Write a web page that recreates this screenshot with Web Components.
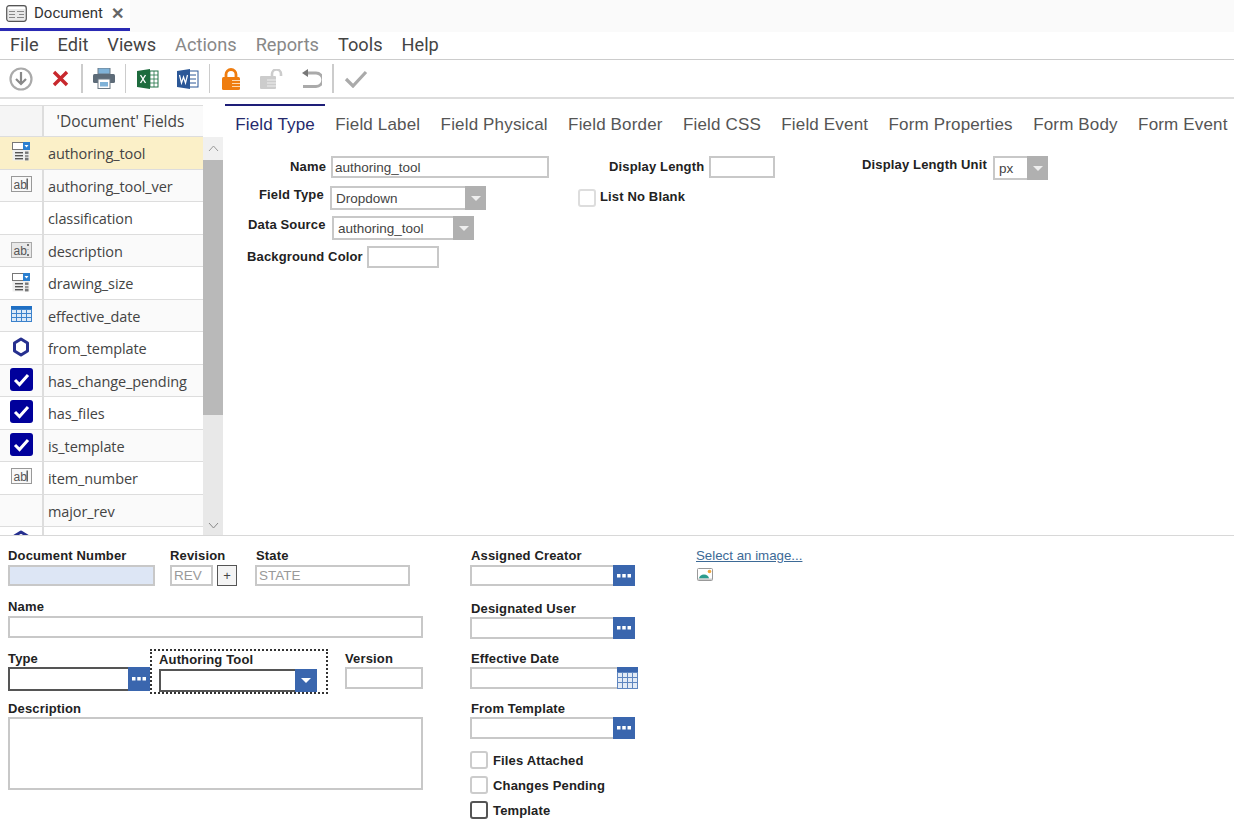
<!DOCTYPE html>
<html><head><meta charset="utf-8"><style>
html,body{margin:0;padding:0;background:#fff}
body{width:1234px;height:829px;overflow:hidden;display:flex;flex-direction:column;font-family:"Liberation Sans",sans-serif}
svg{display:block}
</style></head><body>
<app-tabbar></app-tabbar>
<app-menu></app-menu>
<app-toolbar></app-toolbar>
<design-pane></design-pane>
<form-canvas></form-canvas>
<script>
const ICONS={
dd:`<svg width="18" height="19" viewBox="0 0 18 19"><rect x=".5" y=".5" width="11" height="7" fill="#fff" stroke="#777"/><rect x="11" y="0" width="7" height="8" fill="#2a7fd0"/><path d="M12.500 3h4l-2 2.500z" fill="#fff"/><rect x=".5" y="8" width="17" height="10.500" fill="#eee"/><rect x="3" y="10" width="8" height="1.400" fill="#555"/><rect x="3" y="13" width="8" height="1.400" fill="#555"/><rect x="3" y="16" width="8" height="1.400" fill="#555"/><rect x="13" y="9.500" width="3.500" height="2.400" fill="#777"/><rect x="13" y="13" width="3.500" height="2.400" fill="#999"/><rect x="13" y="16" width="3.500" height="2.400" fill="#777"/></svg>`,
abl:`<svg width="21" height="16" viewBox="0 0 21 16"><rect x=".5" y=".5" width="20" height="15" fill="#f8f8f8" stroke="#999"/><text x="2.500" y="12.500" font-family="Liberation Sans" font-size="12" fill="#555">ab</text><rect x="15.500" y="2.500" width="1.400" height="11" fill="#555"/></svg>`,
abt:`<svg width="21" height="16" viewBox="0 0 21 16"><rect x=".5" y=".5" width="20" height="15" fill="#e8e8e8" stroke="#aaa"/><text x="2.500" y="12.500" font-family="Liberation Sans" font-size="12" fill="#555">ab</text><rect x="16" y="2" width="2" height="2" fill="#777"/><rect x="16" y="7" width="2" height="1" fill="#bbb"/><rect x="16" y="12" width="2" height="2" fill="#777"/></svg>`,
cal:`<svg width="21" height="16" viewBox="0 0 21 16"><rect width="21" height="4" fill="#1f6fc4"/><rect x=".5" y="3.500" width="20" height="12" fill="#dbe9f8" stroke="#3b82cc"/><path d="M5.500 4v12M10.500 4v12M15.500 4v12M0 7.500h21M0 11.500h21" stroke="#3b82cc"/></svg>`,
hex:`<svg width="20" height="20" viewBox="0 0 20 20"><path d="M10 2l6.500 4v8l-6.500 4-6.500-4V6z" fill="#fff" stroke="#26308f" stroke-width="3" stroke-linejoin="round"/></svg>`,
chk:`<svg width="23" height="23" viewBox="0 0 23 23"><rect width="23" height="23" rx="3" fill="#00009b"/><path d="M5 12l4.500 4.500L18 7" fill="none" stroke="#fff" stroke-width="3"/></svg>`
};
function def(name,html,init){customElements.define(name,class extends HTMLElement{constructor(){super();this.attachShadow({mode:'open'}).innerHTML=typeof html==='function'?html(this):html}connectedCallback(){if(init)init(this)}})}

def('app-tabbar',`<style>
:host{display:flex;height:32px;background:#fafafa;flex:none}
.tab{width:130px;height:31px;box-sizing:border-box;background:#fff;border-bottom:3px solid #2a2ab4;display:flex;align-items:center;padding:0 0 2px 6px;gap:7px;font:15px Roboto,sans-serif;color:#333}
.x{font-size:16px;font-weight:700;color:#666;margin-left:1px;font-family:"Liberation Sans"}
</style><div class="tab"><svg width="21" height="17" viewBox="0 0 21 17"><rect x=".7" y=".7" width="19.600" height="15.600" rx="2.500" fill="#e9e9e9" stroke="#555" stroke-width="1.200"/><rect x="2" y="2" width="17" height="2" fill="#fff"/><path d="M3 6.500h6M3 9.500h6M3 12.500h6M11 6.500h7M13 9.500h5M11 12.500h7" stroke="#888"/></svg><span>Document</span><span class="x">✕</span></div>`);

def('app-menu',`<style>
:host{display:flex;height:28px;box-sizing:border-box;flex:none;border-bottom:1px solid #ccc;padding:0 0 0 10px;gap:19px;align-items:center;font:18.200px Roboto,sans-serif;color:#444}
span.off{color:#888}
span{position:relative;top:-1px}
</style><span>File</span><span>Edit</span><span>Views</span><span class="off">Actions</span><span class="off">Reports</span><span>Tools</span><span>Help</span>`);

def('app-toolbar',`<style>
:host{display:flex;height:39px;box-sizing:border-box;flex:none;border-bottom:2px solid #ddd;align-items:center;padding-left:8px}
i{display:block;width:1px;height:29px;background:#ccc;flex:none}
i.b{width:2px}
.s{display:flex;align-items:center;justify-content:center;flex:none}
</style>
<div class="s" style="width:25px"><svg width="24" height="24" viewBox="0 0 24 24"><circle cx="12" cy="12" r="10.500" fill="none" stroke="#aaa" stroke-width="2.200"/><path d="M12 5v12M7 12l5 5 5-5" fill="none" stroke="#888" stroke-width="2.200"/></svg></div>
<div class="s" style="width:48px;padding-left:6px;box-sizing:border-box"><svg width="17" height="17" viewBox="0 0 17 17"><path d="M2 2l13 13M15 2L2 15" stroke="#c8282d" stroke-width="3.400"/></svg></div>
<i class="b"></i>
<div class="s" style="width:42px"><svg width="22" height="21" viewBox="0 0 22 21"><rect x="5" y="0" width="12" height="6" fill="#7fb2d8" stroke="#6c7a86"/><rect y="6" width="22" height="9" rx="1.500" fill="#5d6b78"/><rect x="5" y="11" width="12" height="9.500" fill="#fff" stroke="#6c7a86"/><rect x="7" y="14" width="8" height="4.500" fill="#7fb2d8"/></svg></div>
<i></i>
<div class="s" style="width:43px"><svg width="22" height="20" viewBox="0 0 22 20"><rect x="8" y="2" width="13" height="16" fill="#fff" stroke="#217346"/><path d="M13 2v16M17 2v16M8 6h13M8 10h13M8 14h13" stroke="#217346" stroke-width=".8"/><path d="M0 2l13-2v20L0 18z" fill="#1d6b3d"/><path d="M3.500 6l5 8M8.500 6l-5 8" stroke="#fff" stroke-width="1.400"/></svg></div>
<div class="s" style="width:37px;margin-right:3px"><svg width="22" height="20" viewBox="0 0 22 20"><rect x="8" y="2" width="13" height="16" fill="#fff" stroke="#2b5797"/><path d="M12 6h7M12 10h7M12 14h7" stroke="#2b5797"/><path d="M0 2l13-2v20L0 18z" fill="#2b5797"/><path d="M2.500 6l2 8 2-6 2 6 2-8" fill="none" stroke="#fff" stroke-width="1.200"/></svg></div>
<i></i>
<div class="s" style="width:42px"><svg width="18" height="22" viewBox="0 0 18 22"><path d="M4 10V6.500a5 5 0 0 1 10 0V10" fill="none" stroke="#ef7d0f" stroke-width="2.800"/><rect y="9" width="18" height="13" rx="1.500" fill="#ef7d0f"/><path d="M10 12.500h8M10 15.500h8M10 18.500h8" stroke="#ffd9ae" stroke-width="1.200"/></svg></div>
<div class="s" style="width:39px"><svg width="23" height="20" viewBox="0 0 23 20"><path d="M12 8V5a4.500 4.500 0 0 1 9 0v2" fill="none" stroke="#ccc" stroke-width="2.600"/><rect y="7" width="16" height="13" rx="1" fill="#ccc"/><path d="M7 11h9M7 14h9M7 17h9" stroke="#eee"/></svg></div>
<div class="s" style="width:41px"><svg width="21" height="19" viewBox="0 0 21 19"><path d="M5 4h10a6 6 0 0 1 0 13.500H2" fill="none" stroke="#aaa" stroke-width="2.800"/><path d="M7 0v8L1 4z" fill="#777"/></svg></div>
<i class="b"></i>
<div class="s" style="width:43px"><svg width="24" height="18" viewBox="0 0 24 18"><path d="M2 9l7 7L22 2" fill="none" stroke="#aaa" stroke-width="3.200"/></svg></div>`);

def('field-row',el=>`<style>
:host{display:flex;height:32.500px;box-sizing:border-box;border-bottom:1px solid #ddd;background:var(--bg,#fff);flex:none}
.i{width:44px;flex:none;box-sizing:border-box;border-right:2px solid var(--div,#ddd);display:flex;justify-content:center;padding-top:${el.getAttribute('pt')||4}px}
.t{padding-left:4px;font:14.500px "Open Sans",sans-serif;color:#444;line-height:34px;height:31px;letter-spacing:-.1px}
</style><div class="i">${ICONS[el.getAttribute('icon')]||''}</div><div class="t"><slot></slot></div>`);

def('field-list',`<style>
:host{display:flex;flex-direction:column;width:203px;flex:none;padding-top:6px;box-sizing:border-box;overflow:hidden;height:436px}
.h{display:flex;height:32px;flex:none;box-sizing:border-box;border-top:1px solid #ddd;border-bottom:1px solid #ddd;background:#f5f5f5}
.h b{width:44px;flex:none;border-right:2px solid #ddd;box-sizing:border-box}
.h span{flex:1;text-align:center;font:15.500px "Open Sans",sans-serif;color:#444;line-height:30px;background:#fafafa;padding-right:6px}
</style><div class="h"><b></b><span>'Document' Fields</span></div><slot></slot>`);

def('scroll-bar',`<style>
:host{display:flex;flex-direction:column;width:20px;flex:none;margin-top:38px;height:398px;background:#e8e8e8}
.u{height:23px;background:#f0f0f0;display:flex;align-items:center;justify-content:center}
.t{height:255px;background:#b9b9b9}
.f{flex:1}
.d{height:20px;display:flex;align-items:center;justify-content:center;margin-bottom:0}
</style><div class="u"><svg width="11" height="7" viewBox="0 0 11 7"><path d="M1 6l4.500-5 4.500 5" fill="none" stroke="#999"/></svg></div><div class="t"></div><div class="f"></div><div class="d"><svg width="11" height="7" viewBox="0 0 11 7"><path d="M1 1l4.500 5 4.500-5" fill="none" stroke="#888"/></svg></div>`);

def('prop-tabs',`<style>
:host{display:flex;height:51px;padding-top:5px;box-sizing:border-box;flex:none;font:17px "Liberation Sans",sans-serif;color:#555;letter-spacing:.16px}
span{display:block;padding:0 10.200px;line-height:38px;white-space:nowrap;border-top:2px solid transparent}
span.on{color:#262a6c;border-top-color:#1e1e78;}
</style><span class="on">Field Type</span><span>Field Label</span><span>Field Physical</span><span>Field Border</span><span>Field CSS</span><span>Field Event</span><span>Form Properties</span><span>Form Body</span><span>Form Event</span>`);

/* A field placed on the form-designer canvas: its place is the content */
def('fd-label',`<style>:host{position:absolute;left:var(--x);top:var(--y);display:block;font:700 13px/16px "Liberation Sans",sans-serif;color:#222;white-space:nowrap;letter-spacing:.15px}</style><slot></slot>`);
def('fd-input',el=>`<style>:host{position:absolute;left:var(--x);top:var(--y);width:var(--w);height:var(--h,22px);box-sizing:border-box;display:flex;align-items:center;background:var(--bg,#fff);border:var(--bw,2px) solid var(--bc,#c8c8c8);border-radius:0;padding-left:2px;font:13.500px "Liberation Sans",sans-serif;color:var(--c,#444);white-space:nowrap}</style><slot></slot>`);
def('fd-select',`<style>:host{position:absolute;left:var(--x);top:var(--y);width:var(--w);height:24px;box-sizing:border-box;display:flex;background:#fff;border:2px solid #c8c8c8;font:13.500px "Liberation Sans",sans-serif;color:#444}
.t{flex:1;padding:3px 0 0 4px}
.a{width:21px;background:#b0b0b0;display:flex;align-items:center;justify-content:center;margin:-2px -2px -2px 0;flex:none}
</style><div class="t"><slot></slot></div><div class="a"><svg width="10" height="5" viewBox="0 0 10 5"><path d="M0 0h10L5 5z" fill="#eee"/></svg></div>`);
const DOTS=`<svg width="14" height="4" viewBox="0 0 14 4"><rect x="0" width="3.500" height="3.500" fill="#fff"/><rect x="5.250" width="3.500" height="3.500" fill="#fff"/><rect x="10.500" width="3.500" height="3.500" fill="#fff"/></svg>`;
def('fd-lookup',`<style>:host{position:absolute;left:var(--x);top:var(--y);width:var(--w,165px);height:var(--h,22px);display:flex;box-sizing:border-box}
.f{flex:1;box-sizing:border-box;border:2px solid var(--bc,#c8c8c8);border-right:0;background:#fff}
.b{width:22px;background:#3a66ae;display:flex;align-items:center;justify-content:center;flex:none}
</style><div class="f"></div><div class="b">${DOTS}</div>`);
def('fd-date',`<style>:host{position:absolute;left:var(--x);top:var(--y);width:168px;height:22px;display:flex}
.f{flex:1;box-sizing:border-box;border:2px solid #c8c8c8;border-right:0;background:#fff}
</style><div class="f"></div><svg width="21" height="22" viewBox="0 0 21 22"><rect width="21" height="5" fill="#3a66ae"/><rect x=".5" y="5.500" width="20" height="16" fill="#e3ebf6" stroke="#5f86c0"/><path d="M5.500 5v17M10.500 5v17M15.500 5v17M0 10.500h21M0 15.500h21" stroke="#5f86c0"/></svg>`);
def('fd-check',`<style>:host{position:absolute;left:var(--x);top:var(--y);width:18px;height:18px;box-sizing:border-box;border:2px solid var(--bc,#ccc);border-radius:3px;background:#fff;display:block}</style>`);
def('fd-plus',`<style>:host{position:absolute;left:var(--x);top:var(--y);width:20px;height:21px;box-sizing:border-box;border:1.500px solid #555;background:#f4f4f4;display:flex;align-items:center;justify-content:center;font:13px "Liberation Sans",sans-serif;color:#444}</style>+`);
def('fd-focus',`<style>:host{position:absolute;left:var(--x);top:var(--y);width:178px;height:45px;box-sizing:border-box;border:2px dotted #333;display:block}</style>`);
def('fd-link',`<style>:host{position:absolute;left:var(--x);top:var(--y);font:13.300px/16px "Liberation Sans",sans-serif;color:#3d6a96;text-decoration:underline;white-space:nowrap}</style><slot></slot>`);

def('design-pane',`<style>
:host{display:flex;flex:none;height:437px;border-bottom:1px solid #d8d8d8;box-sizing:border-box;position:relative}
.r{margin-left:2px;flex:1;display:flex;flex-direction:column}
.p{position:relative;flex:1}
</style>
<field-list>
<field-row icon="dd" pt="5" style="--bg:#fbf0c8;--div:#fbf0c8">authoring_tool</field-row>
<field-row icon="abl" pt="6" style="--bg:#fafafa">authoring_tool_ver</field-row>
<field-row>classification</field-row>
<field-row icon="abt" pt="7" style="--bg:#fafafa">description</field-row>
<field-row icon="dd" pt="6">drawing_size</field-row>
<field-row icon="cal" pt="6" style="--bg:#fafafa">effective_date</field-row>
<field-row icon="hex" pt="5">from_template</field-row>
<field-row icon="chk" pt="3" style="--bg:#fafafa">has_change_pending</field-row>
<field-row icon="chk" pt="3">has_files</field-row>
<field-row icon="chk" pt="3" style="--bg:#fafafa">is_template</field-row>
<field-row icon="abl" pt="6">item_number</field-row>
<field-row style="--bg:#fafafa">major_rev</field-row>
<field-row icon="hex" pt="3"></field-row>
</field-list>
<scroll-bar></scroll-bar>
<div class="r"><prop-tabs></prop-tabs><div class="p">
<fd-label style="--x:65px;--y:9px;width:36px;text-align:right">Name</fd-label>
<fd-input style="--x:106px;--y:6px;--w:218px">authoring_tool</fd-input>
<fd-label style="--x:384px;--y:9px">Display Length</fd-label>
<fd-input style="--x:484px;--y:6px;--w:66px"></fd-input>
<fd-label style="--x:637px;--y:7px">Display Length Unit</fd-label>
<fd-select style="--x:768px;--y:6px;--w:55px">px</fd-select>
<fd-label style="--x:34px;--y:37px">Field Type</fd-label>
<fd-select style="--x:105px;--y:36px;--w:156px">Dropdown</fd-select>
<fd-check style="--x:353px;--y:39px;--bc:#ddd"></fd-check>
<fd-label style="--x:375px;--y:39px">List No Blank</fd-label>
<fd-label style="--x:23px;--y:67px">Data Source</fd-label>
<fd-select style="--x:107px;--y:66px;--w:142px">authoring_tool</fd-select>
<fd-label style="--x:22px;--y:99px">Background Color</fd-label>
<fd-input style="--x:142px;--y:96px;--w:72px"></fd-input>
</div></div>`);

def('form-canvas',`<style>:host{display:block;position:relative;flex:1}
.img{position:absolute;left:697px;top:32px}
</style>
<fd-label style="--x:8px;--y:12px">Document Number</fd-label>
<fd-input style="--x:8px;--y:29px;--w:147px;--h:21px;--bg:#dde6f5"></fd-input>
<fd-label style="--x:170px;--y:12px">Revision</fd-label>
<fd-input style="--x:170px;--y:29px;--w:43px;--h:21px;--c:#999">REV</fd-input>
<fd-plus style="--x:217px;--y:29px"></fd-plus>
<fd-label style="--x:256px;--y:12px">State</fd-label>
<fd-input style="--x:255px;--y:29px;--w:155px;--h:21px;--c:#999">STATE</fd-input>
<fd-label style="--x:8px;--y:63px">Name</fd-label>
<fd-input style="--x:8px;--y:80px;--w:415px"></fd-input>
<fd-label style="--x:8px;--y:115px">Type</fd-label>
<fd-lookup style="--x:8px;--y:131px;--w:142px;--h:24px;--bc:#555"></fd-lookup>
<fd-focus style="--x:150px;--y:113px"></fd-focus>
<fd-label style="--x:159px;--y:116px">Authoring Tool</fd-label>
<fd-lookup id="at" style="--x:159px;--y:133px;--w:158px;--h:23px;--bc:#555"></fd-lookup>
<fd-label style="--x:345px;--y:115px">Version</fd-label>
<fd-input style="--x:345px;--y:131px;--w:78px"></fd-input>
<fd-label style="--x:8px;--y:165px">Description</fd-label>
<fd-input style="--x:8px;--y:181px;--w:415px;--h:73px"></fd-input>
<fd-label style="--x:471px;--y:12px">Assigned Creator</fd-label>
<fd-lookup style="--x:470px;--y:29px;--h:21px"></fd-lookup>
<fd-label style="--x:471px;--y:65px">Designated User</fd-label>
<fd-lookup style="--x:470px;--y:81px"></fd-lookup>
<fd-label style="--x:471px;--y:115px">Effective Date</fd-label>
<fd-date style="--x:470px;--y:131px"></fd-date>
<fd-label style="--x:471px;--y:165px">From Template</fd-label>
<fd-lookup style="--x:470px;--y:181px"></fd-lookup>
<fd-check style="--x:470px;--y:215px;--bc:#ccc"></fd-check>
<fd-label style="--x:493px;--y:217px">Files Attached</fd-label>
<fd-check style="--x:470px;--y:240px;--bc:#ccc"></fd-check>
<fd-label style="--x:493px;--y:242px">Changes Pending</fd-label>
<fd-check style="--x:470px;--y:265px;--bc:#555"></fd-check>
<fd-label style="--x:493px;--y:267px">Template</fd-label>
<fd-link style="--x:696px;--y:12px">Select an image...</fd-link>
<svg class="img" width="16" height="13" viewBox="0 0 16 13"><rect x=".5" y=".5" width="15" height="12" rx="1" fill="#fff" stroke="#999"/><path d="M2 10.500a5 4 0 0 1 10 0z" fill="#2d9c8c"/><circle cx="12.500" cy="3.500" r="1.800" fill="#f0a63c"/><rect x="1" y="10.500" width="14" height="1.500" fill="#ccc"/></svg>`,el=>{
 const b=el.shadowRoot.querySelector('#at').shadowRoot.querySelector('.b');
 b.innerHTML='<svg width="10" height="5" viewBox="0 0 10 5"><path d="M0 0h10L5 5z" fill="#fff"/></svg>';
});
</script>
</body></html>
